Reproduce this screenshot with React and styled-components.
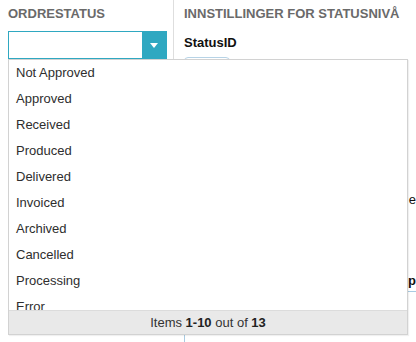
import styled, { createGlobalStyle } from 'styled-components'

const GlobalStyle = createGlobalStyle`
    html, body {
        margin: 0;
        padding: 0;
        background: #fff;
        font-family: "Liberation Sans", Arial, sans-serif;
        color: #333;
    }
    body {
        width: 416px;
        height: 342px;
        overflow: hidden;
    }
`

const Page = styled.div`
    position: relative;
    display: grid;
    grid-template-columns: 174px 1fr;
    align-items: start;
    width: 416px;
    height: 342px;
    overflow: hidden;
`

const LeftColumn = styled.div`
    box-sizing: border-box;
    height: 90px;
    padding: 6px 6px 0 8px;
    border-right: 1px solid #dedede;
`

const RightColumn = styled.div`
    padding: 6px 0 0 10px;
    width: 300px;
`

const SectionTitle = styled.div`
    font-size: 13px;
    font-weight: bold;
    color: #6a6a6a;
    line-height: 15px;
    white-space: nowrap;
`

const ComboBox = styled.div`
    display: flex;
    margin-top: 10px;
    height: 28px;
    box-sizing: border-box;
    border: 1px solid #2fa8c1;
    width: 159px;
`

const ComboInput = styled.div`
    flex: 1;
    background: #fff;
`

const ComboButton = styled.div`
    width: 24px;
    background: #2fa8c1;
    display: flex;
    align-items: center;
    justify-content: center;
`

const Arrow = styled.span`
    width: 0;
    height: 0;
    border-left: 4px solid transparent;
    border-right: 4px solid transparent;
    border-top: 5px solid #fff;
`

const FieldLabel = styled.div`
    font-size: 13px;
    font-weight: ${({ bold }) => (bold ? 'bold' : 'normal')};
    color: #111;
    line-height: 16px;
    margin-top: ${({ top }) => top}px;
    white-space: nowrap;
    text-align: ${({ right }) => (right ? 'right' : 'left')};
    width: ${({ right }) => (right ? '232px' : 'auto')};
`

const SmallInput = styled.div`
    margin-top: 6px;
    width: 46px;
    height: 28px;
    box-sizing: border-box;
    border: 1px solid #b7d3e6;
    border-radius: 4px;
`

const WideInput = styled.div`
    margin-top: 2px;
    width: 280px;
    height: 80px;
    box-sizing: border-box;
    border: 1px solid #a9cbe2;
    border-radius: 3px;
`

const Popup = styled.div`
    position: absolute;
    top: 59px;
    left: 8px;
    width: 400px;
    height: 276px;
    box-sizing: border-box;
    background: #fff;
    border: 1px solid #d2d2d2;
    box-shadow: 1px 1px 1px rgba(0, 0, 0, 0.06);
    display: flex;
    flex-direction: column;
    overflow: hidden;
`

const OptionList = styled.ul`
    flex: 1;
    margin: 0;
    padding: 0;
    list-style: none;
    overflow: hidden;
`

const Option = styled.li`
    height: 26px;
    line-height: 26px;
    padding-left: 7px;
    font-size: 13px;
    color: #2e2e2e;
`

const Footer = styled.div`
    height: 23px;
    line-height: 23px;
    background: #e9e9e9;
    border-top: 1px solid #dcdcdc;
    text-align: center;
    font-size: 13px;
    color: #333;

    b {
        color: #222;
    }
`

const statuses = [
    'Not Approved',
    'Approved',
    'Received',
    'Produced',
    'Delivered',
    'Invoiced',
    'Archived',
    'Cancelled',
    'Processing',
    'Error',
]

function App() {
    return (
        <Page>
            <GlobalStyle />
            <LeftColumn>
                <SectionTitle>ORDRESTATUS</SectionTitle>
                <ComboBox>
                    <ComboInput />
                    <ComboButton>
                        <Arrow />
                    </ComboButton>
                </ComboBox>
            </LeftColumn>
            <RightColumn>
                <SectionTitle>INNSTILLINGER FOR STATUSNIVÅ</SectionTitle>
                <FieldLabel bold top={14}>StatusID</FieldLabel>
                <SmallInput />
                <FieldLabel right top={107}>Send varsel via e</FieldLabel>
                <FieldLabel bold right top={65}>Kundegrupp</FieldLabel>
                <WideInput />
            </RightColumn>
            <Popup>
                <OptionList>
                    {statuses.map((s) => (
                        <Option key={s}>{s}</Option>
                    ))}
                </OptionList>
                <Footer>
                    Items <b>1-10</b> out of <b>13</b>
                </Footer>
            </Popup>
        </Page>
    )
}

export default App
